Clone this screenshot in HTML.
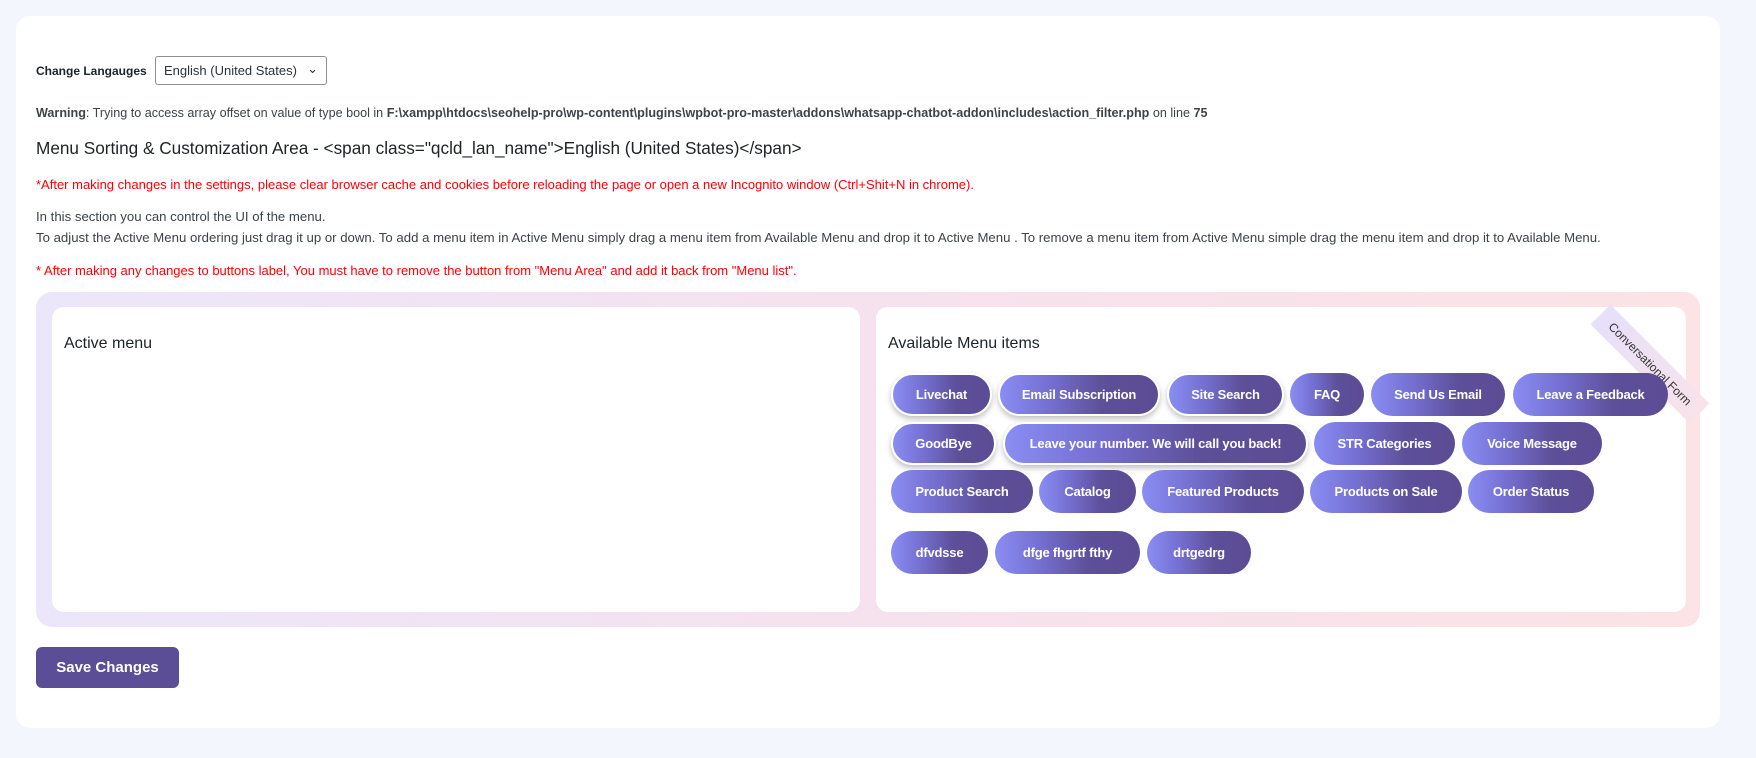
<!DOCTYPE html>
<html><head><meta charset="utf-8"><style>
*{box-sizing:border-box;margin:0;padding:0}
body{width:1756px;height:758px;background:#f3f6fc;font-family:"Liberation Sans",sans-serif;color:#333;position:relative;overflow:hidden}
.card{position:absolute;left:16px;top:16px;width:1704px;height:712px;background:#fff;border-radius:14px}
.abs{position:absolute;white-space:nowrap}
.sel{position:absolute;left:155px;top:56px;width:172px;height:29px;border:1px solid #8c8f94;border-radius:3px;font-size:13px;color:#2c3338;padding:6px 8px}
.red{color:#f00}
.wrap{position:absolute;left:36px;top:292px;width:1664px;height:335px;border-radius:16px;background:linear-gradient(90deg,#ece6fa,#f6e2ee 50%,#fbe3e6)}
.panel{position:absolute;top:307px;height:305px;background:#fff;border-radius:12px}
.b{position:absolute;height:43px;border-radius:22px;background:linear-gradient(90deg,#8a8df3 0%,#7570d2 30%,#5d4f99 65%,#5b4c94 100%);color:#fff;font-weight:bold;font-size:13px;display:flex;align-items:center;justify-content:center;white-space:nowrap;letter-spacing:-0.2px}
.s{border:2px solid #fff;box-shadow:0 3px 6px rgba(0,0,0,.25)}
.rib{position:absolute;left:1580px;top:350px;width:140px;height:28px;transform:rotate(45deg);background:linear-gradient(90deg,#e6e0fa,#f9e2ea);font-size:12px;color:#333;display:flex;align-items:center;justify-content:center}
.save{position:absolute;left:36px;top:647px;width:143px;height:41px;background:#5b4d96;border-radius:6px;color:#fff;font-weight:bold;font-size:15px;display:flex;align-items:center;justify-content:center}
</style></head><body>
<div class="card"></div>
<div class="abs" style="left:36px;top:64px;font-size:12px;font-weight:bold;color:#1d2327">Change Langauges</div>
<div class="sel">English (United States) <span style="position:absolute;right:8px;top:4px;font-size:13px">⌄</span></div>
<div class="abs" style="left:36px;top:106px;font-size:12.6px;color:#3c434a"><b>Warning</b>: Trying to access array offset on value of type bool in <b>F:\xampp\htdocs\seohelp-pro\wp-content\plugins\wpbot-pro-master\addons\whatsapp-chatbot-addon\includes\action_filter.php</b> on line <b>75</b></div>
<div class="abs" style="left:36px;top:138px;font-size:17.2px;color:#1d2327">Menu Sorting &amp; Customization Area - &lt;span class="qcld_lan_name"&gt;English (United States)&lt;/span&gt;</div>
<div class="abs red" style="left:36px;top:177px;font-size:13px">*After making changes in the settings, please clear browser cache and cookies before reloading the page or open a new Incognito window (Ctrl+Shit+N in chrome).</div>
<div class="abs" style="left:36px;top:209px;font-size:13.2px;color:#3c434a">In this section you can control the UI of the menu.</div>
<div class="abs" style="left:36px;top:230px;font-size:13.2px;color:#3c434a">To adjust the Active Menu ordering just drag it up or down. To add a menu item in Active Menu simply drag a menu item from Available Menu and drop it to Active Menu . To remove a menu item from Active Menu simple drag the menu item and drop it to Available Menu.</div>
<div class="abs red" style="left:36px;top:263px;font-size:13px">* After making any changes to buttons label, You must have to remove the button from "Menu Area" and add it back from "Menu list".</div>
<div class="wrap"></div>
<div class="panel" style="left:52px;width:808px"></div>
<div class="panel" style="left:876px;width:810px;overflow:hidden"></div>
<div class="abs" style="left:64px;top:335px;font-size:16px;color:#1d2327">Active menu</div>
<div class="abs" style="left:888px;top:335px;font-size:16px;color:#1d2327">Available Menu items</div>
<div class="rib">Conversational Form</div>
<div class="b s" style="left:891px;top:373px;width:101px">Livechat</div>
<div class="b s" style="left:998px;top:373px;width:162px">Email Subscription</div>
<div class="b s" style="left:1167px;top:373px;width:117px">Site Search</div>
<div class="b" style="left:1290px;top:373px;width:74px">FAQ</div>
<div class="b" style="left:1371px;top:373px;width:134px">Send Us Email</div>
<div class="b" style="left:1513px;top:373px;width:155px">Leave a Feedback</div>
<div class="b s" style="left:891px;top:422px;width:105px">GoodBye</div>
<div class="b s" style="left:1003px;top:422px;width:305px">Leave your number. We will call you back!</div>
<div class="b" style="left:1314px;top:422px;width:141px">STR Categories</div>
<div class="b" style="left:1462px;top:422px;width:140px">Voice Message</div>
<div class="b" style="left:891px;top:470px;width:142px">Product Search</div>
<div class="b" style="left:1039px;top:470px;width:97px">Catalog</div>
<div class="b" style="left:1142px;top:470px;width:162px">Featured Products</div>
<div class="b" style="left:1310px;top:470px;width:152px">Products on Sale</div>
<div class="b" style="left:1468px;top:470px;width:126px">Order Status</div>
<div class="b" style="left:891px;top:531px;width:97px">dfvdsse</div>
<div class="b" style="left:995px;top:531px;width:145px">dfge fhgrtf fthy</div>
<div class="b" style="left:1147px;top:531px;width:104px">drtgedrg</div>
<div class="save">Save Changes</div>
</body></html>
